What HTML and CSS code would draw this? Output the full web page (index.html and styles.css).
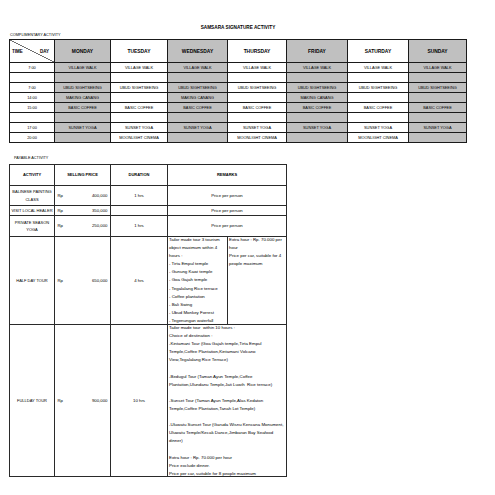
FILE: index.html
```html
<!DOCTYPE html>
<html>
<head>
<meta charset="utf-8">
<link rel="stylesheet" href="styles.css">
</head>
<body>
<div class="page">
  <div class="title">SAMSARA SIGNATURE ACTIVITY</div>
  <div class="label first">COMPLIMENTARY ACTIVITY</div>
  <div class="sched">
    <div class="c hd diag"><span>TIME</span><span>DAY</span></div>
    <div class="c hd g">MONDAY</div>
    <div class="c hd">TUESDAY</div>
    <div class="c hd g">WEDNESDAY</div>
    <div class="c hd">THURSDAY</div>
    <div class="c hd g">FRIDAY</div>
    <div class="c hd">SATURDAY</div>
    <div class="c hd g">SUNDAY</div>

    <div class="c">7:00</div>
    <div class="c g">VILLAGE WALK</div>
    <div class="c">VILLAGE WALK</div>
    <div class="c g">VILLAGE WALK</div>
    <div class="c">VILLAGE WALK</div>
    <div class="c g">VILLAGE WALK</div>
    <div class="c">VILLAGE WALK</div>
    <div class="c g">VILLAGE WALK</div>

    <div class="c"></div>
    <div class="c g"></div>
    <div class="c"></div>
    <div class="c g"></div>
    <div class="c"></div>
    <div class="c g"></div>
    <div class="c"></div>
    <div class="c g"></div>

    <div class="c">7:00</div>
    <div class="c g">UBUD SIGHTSEEING</div>
    <div class="c">UBUD SIGHTSEEING</div>
    <div class="c g">UBUD SIGHTSEEING</div>
    <div class="c">UBUD SIGHTSEEING</div>
    <div class="c g">UBUD SIGHTSEEING</div>
    <div class="c">UBUD SIGHTSEEING</div>
    <div class="c g">UBUD SIGHTSEEING</div>

    <div class="c">14:00</div>
    <div class="c g">MAKING CANANG</div>
    <div class="c"></div>
    <div class="c g">MAKING CANANG</div>
    <div class="c"></div>
    <div class="c g">MAKING CANANG</div>
    <div class="c"></div>
    <div class="c g"></div>

    <div class="c">15:00</div>
    <div class="c g">BASIC COFFEE</div>
    <div class="c">BASIC COFFEE</div>
    <div class="c g">BASIC COFFEE</div>
    <div class="c">BASIC COFFEE</div>
    <div class="c g">BASIC COFFEE</div>
    <div class="c">BASIC COFFEE</div>
    <div class="c g">BASIC COFFEE</div>

    <div class="c"></div>
    <div class="c g"></div>
    <div class="c"></div>
    <div class="c g"></div>
    <div class="c"></div>
    <div class="c g"></div>
    <div class="c"></div>
    <div class="c g"></div>

    <div class="c">17:00</div>
    <div class="c g">SUNSET YOGA</div>
    <div class="c">SUNSET YOGA</div>
    <div class="c g">SUNSET YOGA</div>
    <div class="c">SUNSET YOGA</div>
    <div class="c g">SUNSET YOGA</div>
    <div class="c">SUNSET YOGA</div>
    <div class="c g">SUNSET YOGA</div>

    <div class="c">20:00</div>
    <div class="c g"></div>
    <div class="c">MOONLIGHT CINEMA</div>
    <div class="c g"></div>
    <div class="c">MOONLIGHT CINEMA</div>
    <div class="c g"></div>
    <div class="c">MOONLIGHT CINEMA</div>
    <div class="c g"></div>
  </div>

  <div class="label second">PAYABLE ACTIVITY</div>
  <div class="pay">
    <div class="p ph">ACTIVITY</div>
    <div class="p ph">SELLING PRICE</div>
    <div class="p ph">DURATION</div>
    <div class="p ph span2">REMARKS</div>

    <div class="p act">BALINESE PAINTING<br>CLASS</div>
    <div class="p price"><span>Rp</span><span>400,000</span></div>
    <div class="p">1 hrs</div>
    <div class="p span2">Price per person</div>

    <div class="p act">VISIT LOCAL HEALER</div>
    <div class="p price"><span>Rp</span><span>350,000</span></div>
    <div class="p"></div>
    <div class="p span2">Price per person</div>

    <div class="p act">PRIVATE SEASON<br>YOGA</div>
    <div class="p price"><span>Rp</span><span>250,000</span></div>
    <div class="p">1 hrs</div>
    <div class="p span2">Price per person</div>

    <div class="p act">HALF DAY TOUR</div>
    <div class="p price"><span>Rp</span><span>650,000</span></div>
    <div class="p">4 hrs</div>
    <div class="p note"><div class="lines">Tailor made tour 3 tourism<br>object maximum within 4<br>hours :<br>- Tirta Empul temple<br>- Gunung Kawi temple<br>- Goa Gajah temple<br>- Tegalalang Rice terrace<br>- Coffee plantation<br>- Bali Swing<br>- Ubud Monkey Forrest<br>- Tegenungan waterfall</div></div>
    <div class="p note"><div class="lines">Extra hour : Rp. 70.000 per<br>hour<br>Price per car, suitable for 4<br>people maximum</div></div>

    <div class="p act">FULLDAY TOUR</div>
    <div class="p price"><span>Rp</span><span>900,000</span></div>
    <div class="p">10 hrs</div>
    <div class="p note span2"><div class="lines">Tailor made tour&nbsp; within 10 hours :<br>Choice of destination :<br>-Kintamani Tour (Goa Gajah temple,Tirta Empul<br>Temple,Coffee Plantation,Kintamani Volcano<br>View,Tegalalang Rice Terrace)<br>&nbsp;<br>-Bedugul Tour (Taman Ayun Temple,Coffee<br>Plantation,Ulundanu Temple,Jati Luwih&nbsp; Rice terrace)<br>&nbsp;<br>-Sunset Tour (Taman Ayun Temple,Alas Kedaton<br>Temple,Coffee Plantation,Tanah Lot Temple)<br>&nbsp;<br>-Uluwatu Sunset Tour (Garuda Wisnu Kencana Monument,<br>Uluwatu Temple/Kecak Dance,Jimbaran Bay Seafood<br>dinner)<br>&nbsp;<br>Extra hour : Rp. 70.000 per hour<br>Price exclude dinner.<br>Price per car, suitable for 8 people maximum</div></div>
  </div>
</div>
</body>
</html>
```
FILE: styles.css
```css
html, body {
  margin: 0;
  padding: 0;
  background: #ffffff;
}
body {
  font-family: "Liberation Sans", Arial, sans-serif;
  color: #000000;
}
.page {
  padding: 25px 0 0 9px;
}
.title {
  width: 458px;
  text-align: center;
  font-weight: bold;
  font-size: 4.7px;
  line-height: 6px;
  height: 6px;
}
.label {
  font-size: 3.8px;
  line-height: 8px;
  height: 8px;
  white-space: nowrap;
}
.label.first {
  padding-left: 1px;
}
.label.second {
  margin-top: 11px;
  margin-bottom: 2px;
  padding-left: 5px;
}
.sched {
  display: grid;
  grid-template-columns: 44px 55px 56px 59px 58px 60px 60px 57px;
  grid-template-rows: 22px repeat(8, 9px);
  gap: 1px;
  background: #1a1a1a;
  border: 1px solid #1a1a1a;
  width: max-content;
}
.c {
  background: #ffffff;
  display: flex;
  align-items: center;
  justify-content: center;
  font-size: 3.9px;
  white-space: nowrap;
  overflow: hidden;
}
.c.g {
  background: #c0c0c0;
}
.c.hd {
  font-weight: bold;
  font-size: 4.9px;
}
.c.diag {
  justify-content: space-between;
  padding: 0 5px 0 2px;
  font-size: 4.5px;
  background: linear-gradient(to top right, #ffffff calc(50% - 0.6px), #1a1a1a 50%, #ffffff calc(50% + 0.6px));
}
.pay {
  display: grid;
  grid-template-columns: 44px 55px 56px 59px 58px;
  grid-template-rows: 20px 19px 9px 20px 87px 151px;
  gap: 1px;
  background: #2a2a2a;
  border: 1px solid #2a2a2a;
  width: max-content;
}
.p {
  background: #ffffff;
  display: flex;
  align-items: center;
  justify-content: center;
  text-align: center;
  font-size: 4.3px;
  line-height: 7.5px;
  white-space: nowrap;
  overflow: hidden;
}
.p.ph {
  font-weight: bold;
  font-size: 4px;
}
.p.act {
  font-size: 4px;
}
.p.span2 {
  grid-column: span 2;
}
.p.price {
  justify-content: space-between;
  padding: 0 2.5px 0 2.5px;
}
.p.note {
  align-items: flex-start;
  justify-content: flex-start;
  text-align: left;
  padding-left: 1px;
  font-size: 4.4px;
  line-height: 8.1px;
}
.lines {
  margin-top: -1px;
}
```
